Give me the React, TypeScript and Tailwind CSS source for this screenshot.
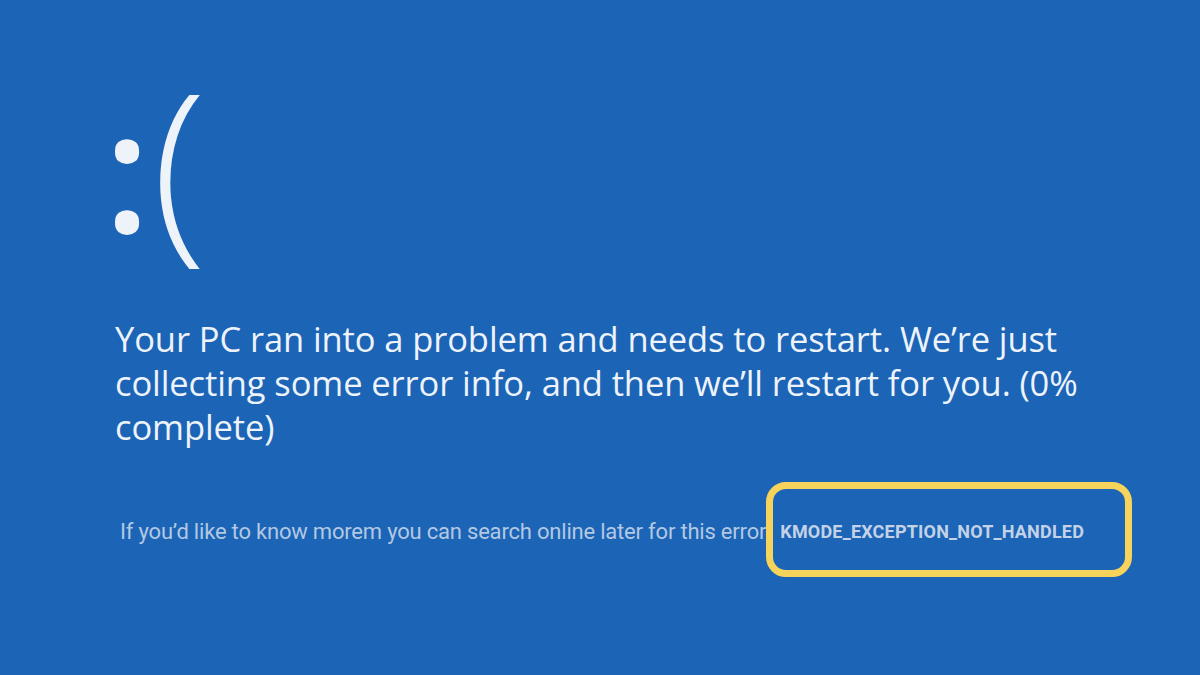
export default function App() {
  return (
    <div className="relative w-[1200px] h-[675px] overflow-hidden bg-[#1b64b6] font-['Open_Sans','Noto_Sans',sans-serif] text-[#eef3fa]">
      <div className="pl-[104px] pt-[45px]">
        <div className="flex items-baseline h-[230px] leading-[230px]">
          <span className="text-[168px] font-semibold -translate-y-[4px]">:</span>
          <span className="ml-[2px] text-[200px] font-light">(</span>
        </div>
        <p className="mt-[42px] pl-[11px] w-[995px] text-[34.5px] leading-[44px] tracking-[-0.1px]">
          Your PC ran into a problem and needs to restart. We’re just collecting some error info, and then we’ll restart for you. (0% complete)
        </p>
        <div className="mt-[66px] pl-[16px] flex items-center gap-[14px] font-['Roboto','Liberation_Sans',sans-serif]">
          <span className="text-[22px] text-[#b3c8e2] tracking-[-0.2px]">
            If you’d like to know morem you can search online later for this error
          </span>
          <span className="text-[18px] font-bold text-[#c3d2e6] tracking-[0.2px]">KMODE_EXCEPTION_NOT_HANDLED</span>
        </div>
      </div>
      <div className="absolute left-[766px] top-[482px] w-[366px] h-[95px] rounded-[20px] border-[7px] border-[#f6d35b]" />
    </div>
  )
}
